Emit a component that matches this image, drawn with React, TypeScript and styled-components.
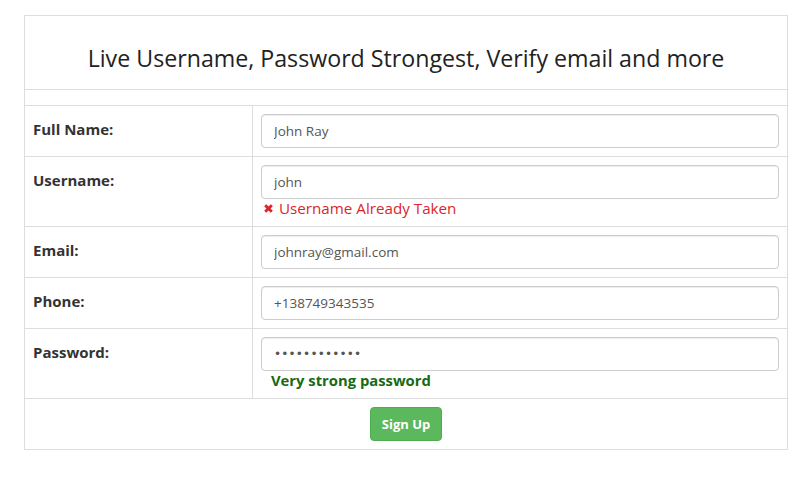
import React from "react";
import styled, { createGlobalStyle } from "styled-components";

const Global = createGlobalStyle`
  html, body { margin: 0; padding: 0; background: #fff; }
  body { font-family: "Open Sans", "DejaVu Sans", sans-serif; color: #333; }
`;

const Page = styled.div`
  padding: 15px 16px 0 24px;
`;

const Table = styled.table`
  width: 764px;
  border-collapse: collapse;
  border: 1px solid #ddd;
`;

const Cell = styled.td<{ $w?: number; $center?: boolean }>`
  border: 1px solid #ddd;
  padding: 8px;
  vertical-align: top;
  ${(p) => (p.$w ? `width: ${p.$w}px;` : "")}
  ${(p) => (p.$center ? "text-align: center;" : "")}
`;

const Title = styled.h2`
  margin: 0;
  padding: 18px 0 7px;
  text-align: center;
  font-size: 23.2px;
  font-weight: 400;
  color: #222;
  line-height: 32px;
`;

const Spacer = styled.td`
  border: 1px solid #ddd;
  height: 15px;
  padding: 0;
`;

const Label = styled.label`
  display: block;
  font-weight: 700;
  font-size: 15px;
  color: #333;
  line-height: 20px;
  padding-top: 5px;
`;

const Input = styled.input`
  display: block;
  box-sizing: border-box;
  width: 100%;
  height: 34px;
  padding: 6px 12px;
  font-family: inherit;
  font-size: 13.5px;
  color: #555;
  border: 1px solid #ccc;
  border-radius: 4px;
  box-shadow: inset 0 1px 1px rgba(0, 0, 0, 0.075);
  outline: none;

  &[type="password"] {
    font-family: "DejaVu Sans", sans-serif;
    font-size: 12px;
    letter-spacing: 0.2px;
  }
`;

const ErrorMsg = styled.div`
  display: flex;
  align-items: center;
  gap: 5px;
  color: #d9262b;
  font-size: 15.2px;
  line-height: 19px;
  padding-left: 2px;
`;

const OkMsg = styled.div`
  color: #186a13;
  font-weight: 700;
  font-size: 14.8px;
  line-height: 19px;
  padding-left: 10px;
`;

const Button = styled.button`
  background: #5cb85c;
  border: 1px solid #4cae4c;
  border-radius: 4px;
  color: #fff;
  font-family: inherit;
  font-weight: 700;
  font-size: 13px;
  height: 34px;
  padding: 0 11px;
  cursor: pointer;
`;

const Cross = () => (
  <svg width="11" height="11" viewBox="0 0 10 10">
    <path d="M2 2 L8 8 M8 2 L2 8" stroke="#d9262b" strokeWidth="2.6" strokeLinecap="butt" />
  </svg>
);

const rows: { label: string; value: string; type?: string; extra?: React.ReactNode }[] = [
  { label: "Full Name:", value: "John Ray" },
  {
    label: "Username:",
    value: "john",
    extra: (
      <ErrorMsg>
        <Cross />
        Username Already Taken
      </ErrorMsg>
    ),
  },
  { label: "Email:", value: "johnray@gmail.com" },
  { label: "Phone:", value: "+138749343535" },
  {
    label: "Password:",
    value: "abcdefghijkl",
    type: "password",
    extra: <OkMsg>Very strong password</OkMsg>,
  },
];

export default function App() {
  return (
    <Page>
      <Global />
      <Table>
        <tbody>
          <tr>
            <Cell colSpan={2}>
              <Title>Live Username, Password Strongest, Verify email and more</Title>
            </Cell>
          </tr>
          <tr>
            <Spacer colSpan={2} />
          </tr>
          {rows.map((r) => (
            <tr key={r.label}>
              <Cell $w={211}>
                <Label>{r.label}</Label>
              </Cell>
              <Cell>
                <Input type={r.type || "text"} defaultValue={r.value} readOnly />
                {r.extra}
              </Cell>
            </tr>
          ))}
          <tr>
            <Cell colSpan={2} $center>
              <Button>Sign Up</Button>
            </Cell>
          </tr>
        </tbody>
      </Table>
    </Page>
  );
}
